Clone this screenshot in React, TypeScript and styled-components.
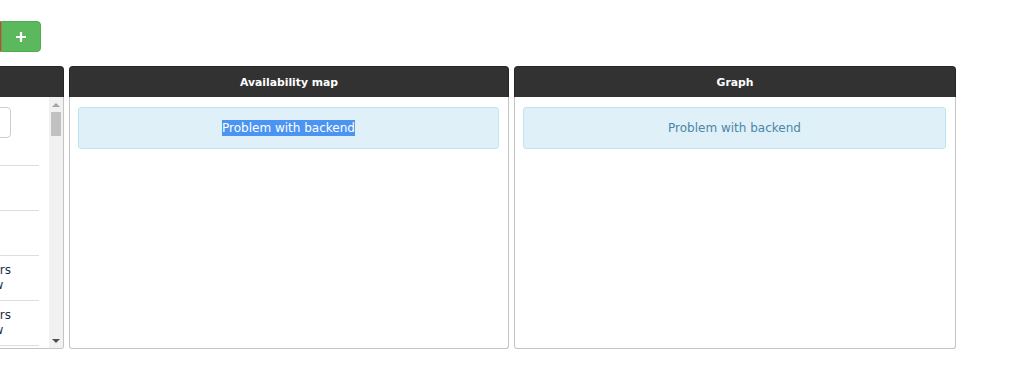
import { FC, ReactNode } from 'react';
import styled, { createGlobalStyle } from 'styled-components';

const GlobalStyle = createGlobalStyle`
    html, body {
        margin: 0;
        padding: 0;
        background: #fff;
        overflow: hidden;
    }

    body {
        font-family: 'DejaVu Sans', Verdana, sans-serif;
        font-size: 12px;
        color: #222;
    }
`;

const Page = styled.div`
    display: flex;
    flex-direction: column;
    gap: 14px;
    padding-top: 21px;
    width: 1024px;
    overflow: hidden;
`;

const Toolbar = styled.div`
    display: flex;
    margin-left: -39px;
`;

const ToolButton = styled.button<{ $variant: 'danger' | 'success' }>`
    display: flex;
    align-items: center;
    justify-content: center;
    width: 40px;
    height: 31px;
    padding: 0;
    border: 1px solid ${(p) => (p.$variant === 'danger' ? '#d43f3a' : '#4cae4c')};
    background: ${(p) => (p.$variant === 'danger' ? '#d9534f' : '#5cb85c')};
    color: #fff;
    border-radius: ${(p) => (p.$variant === 'danger' ? '4px 0 0 4px' : '0 4px 4px 0')};
    margin-left: 0;
    cursor: pointer;
`;

const PanelRow = styled.div`
    display: flex;
    gap: 5px;
    margin-left: -377px;
`;

const PanelBox = styled.div<{ $width: number }>`
    display: flex;
    flex-direction: column;
    flex: 0 0 ${(p) => p.$width}px;
    height: 283px;
`;

const PanelHeader = styled.div`
    display: flex;
    align-items: center;
    justify-content: center;
    height: 31px;
    flex: 0 0 31px;
    background: #323232;
    border: 1px solid #262626;
    border-bottom: none;
    border-radius: 4px 4px 0 0;
    color: #fff;
    font-weight: bold;
    font-size: 10.8px;
    box-sizing: border-box;
`;

const PanelBody = styled.div<{ $scroll?: boolean }>`
    flex: 1;
    display: flex;
    border: 1px solid #c4c4c4;
    border-top: none;
    border-radius: 0 0 3px 3px;
    padding: ${(p) => (p.$scroll ? '0' : '10px 9px 0 8px')};
    flex-direction: ${(p) => (p.$scroll ? 'row' : 'column')};
    overflow: hidden;
    min-height: 0;
`;

const ScrollContent = styled.div`
    flex: 1;
    padding: 10px 10px 0 8px;
    overflow: hidden;
`;

const SearchInput = styled.input`
    display: block;
    width: 379px;
    height: 31px;
    box-sizing: border-box;
    border: 1px solid #ccc;
    border-radius: 4px;
    margin: 0 0 27px;
    padding: 0 8px;
    font: inherit;
`;

const List = styled.div`
    border-top: 1px solid #ddd;
`;

const ListRow = styled.div`
    display: grid;
    grid-template-columns: 1fr 100px;
    align-items: center;
    height: 44px;
    border-bottom: 1px solid #ddd;
`;

const RowLabel = styled.div`
    padding-left: 8px;
    color: #222;
`;

const RowLines = styled.div`
    display: flex;
    flex-direction: column;
    line-height: 15px;
    color: #1e2a4c;
    white-space: nowrap;
`;

const Scrollbar = styled.div`
    flex: 0 0 14px;
    display: flex;
    flex-direction: column;
    align-items: center;
    background: #f1f1f1;
`;

const ScrollArrow = styled.div<{ $dir: 'up' | 'down' }>`
    flex: 0 0 15px;
    display: flex;
    align-items: center;
    justify-content: center;

    &::before {
        content: '';
        width: 0;
        height: 0;
        border-left: 4px solid transparent;
        border-right: 4px solid transparent;
        ${(p) =>
            p.$dir === 'up'
                ? 'border-bottom: 4px solid #a3a3a3;'
                : 'border-top: 4px solid #505050;'}
    }
`;

const ScrollTrack = styled.div`
    flex: 1;
    align-self: stretch;
    display: flex;
    flex-direction: column;
    padding: 0 2px;
`;

const ScrollThumb = styled.div`
    height: 24px;
    background: #c1c1c1;
`;

const InfoAlert = styled.div`
    display: flex;
    align-items: center;
    justify-content: center;
    height: 42px;
    box-sizing: border-box;
    background: #dff0f8;
    border: 1px solid #bde6f2;
    border-radius: 3px;
    color: #4a87a6;
    font-size: 12px;
    padding-bottom: 1px;
`;

const Selected = styled.span`
    background: #4b94f2;
    color: #fff;
    padding: 1px 0;
`;

interface PanelProps {
    title: string;
    width: number;
    scroll?: boolean;
    children?: ReactNode;
}

const Panel: FC<PanelProps> = (props) => {
    return (
        <PanelBox $width={props.width}>
            <PanelHeader>{props.title}</PanelHeader>
            <PanelBody $scroll={props.scroll}>{props.children}</PanelBody>
        </PanelBox>
    );
};

const PlusIcon: FC = () => (
    <svg width="12" height="12" viewBox="0 0 12 12">
        <path d="M6 1v10M1 6h10" stroke="#fff" strokeWidth="2.2" />
    </svg>
);

const rows = [
    { label: 'Status', lines: [] as string[] },
    { label: 'Uptime', lines: [] as string[] },
    { label: 'Monitors', lines: ['All monitors', 'Trend view'] },
    { label: 'Monitors', lines: ['All monitors', 'Trend view'] },
    { label: 'Alerts', lines: ['Last 24 hours', 'Trend view'] },
];

const App: FC = () => {
    return (
        <>
            <GlobalStyle />
            <Page>
                <Toolbar>
                    <ToolButton $variant="danger">−</ToolButton>
                    <ToolButton $variant="success">
                        <PlusIcon />
                    </ToolButton>
                </Toolbar>
                <PanelRow>
                    <Panel title="Monitors" width={441} scroll>
                        <ScrollContent>
                            <SearchInput placeholder="Search" />
                            <List>
                                {rows.map((row, i) => (
                                    <ListRow key={i}>
                                        <RowLabel>{row.label}</RowLabel>
                                        <RowLines>
                                            {row.lines.map((line) => (
                                                <span key={line}>{line}</span>
                                            ))}
                                        </RowLines>
                                    </ListRow>
                                ))}
                            </List>
                        </ScrollContent>
                        <Scrollbar>
                            <ScrollArrow $dir="up" />
                            <ScrollTrack>
                                <ScrollThumb />
                            </ScrollTrack>
                            <ScrollArrow $dir="down" />
                        </Scrollbar>
                    </Panel>
                    <Panel title="Availability map" width={440}>
                        <InfoAlert>
                            <Selected>Problem with backend</Selected>
                        </InfoAlert>
                    </Panel>
                    <Panel title="Graph" width={442}>
                        <InfoAlert>Problem with backend</InfoAlert>
                    </Panel>
                </PanelRow>
            </Page>
        </>
    );
};

export default App;
